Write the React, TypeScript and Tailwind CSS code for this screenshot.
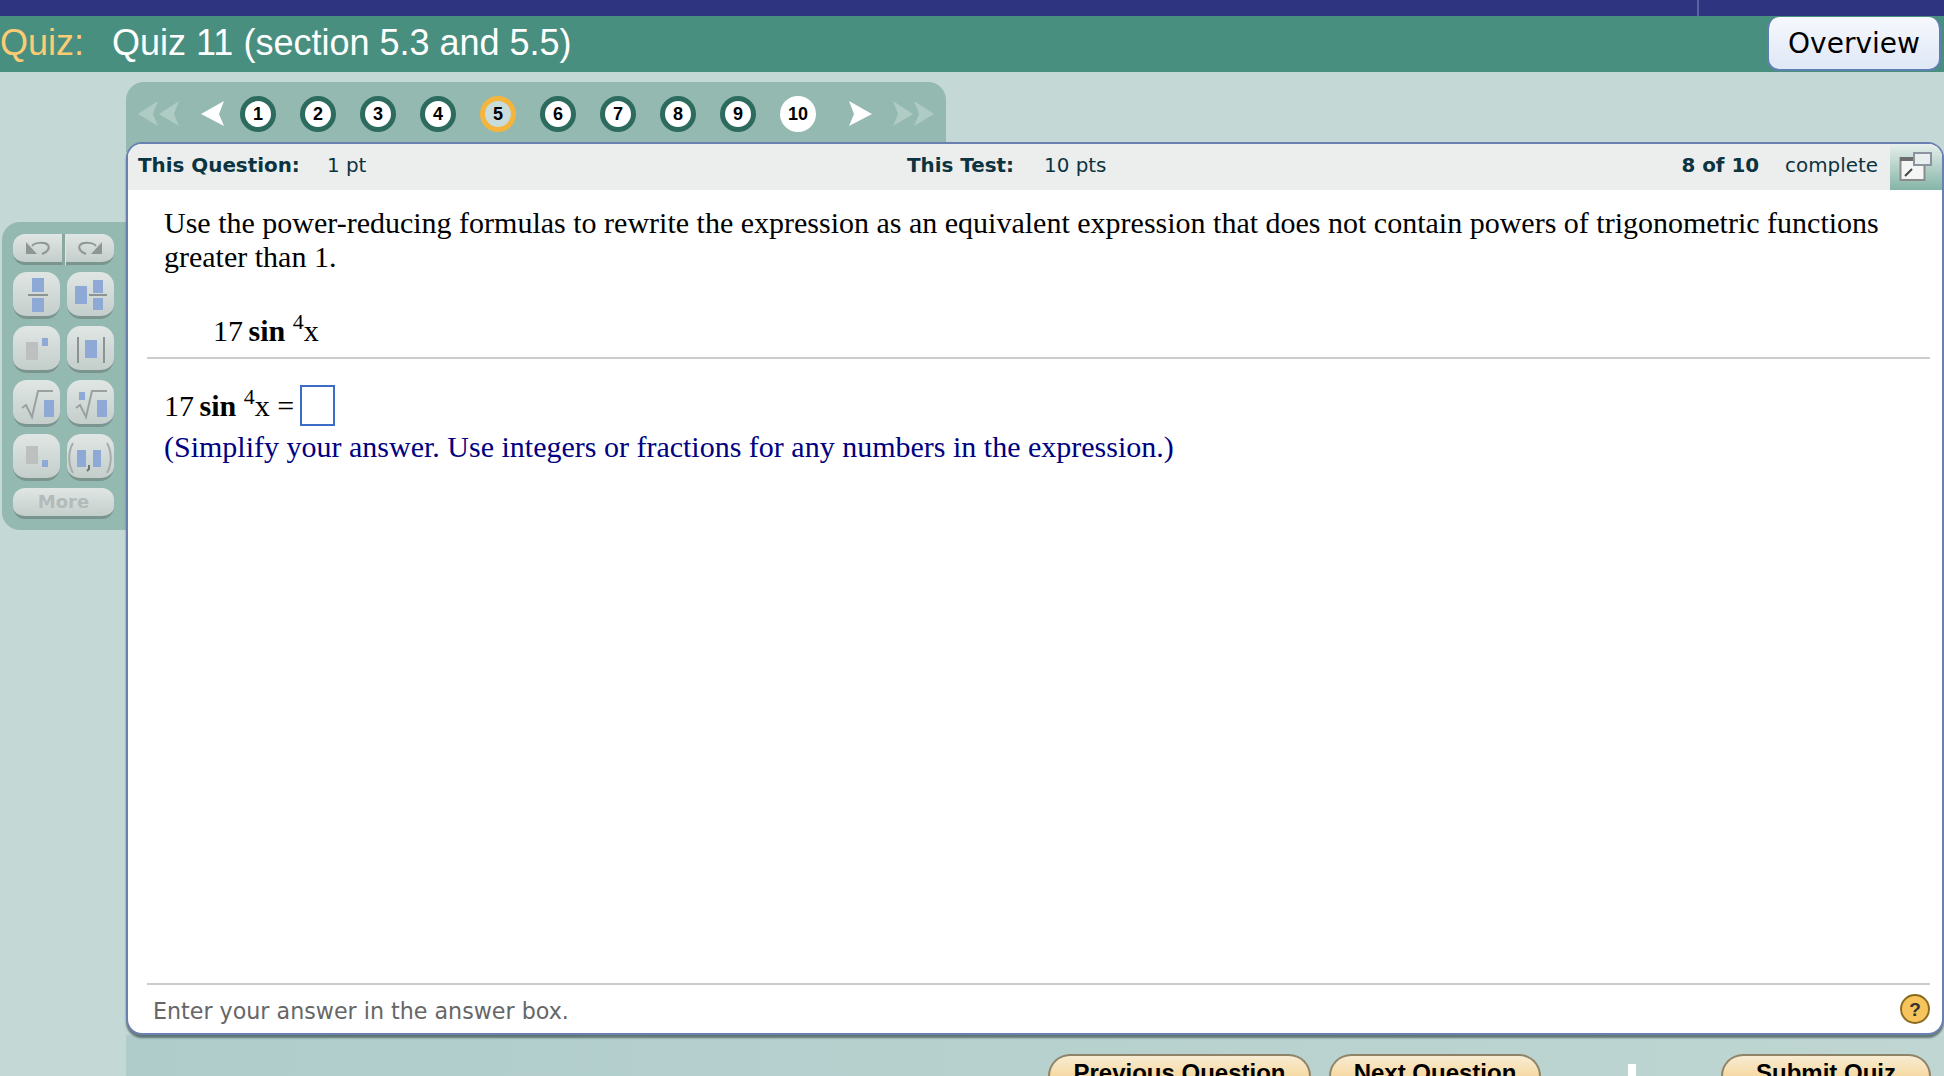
const serif = "font-['Liberation_Serif',serif]";

const questionNums = [1, 2, 3, 4, 5, 6, 7, 8, 9, 10];

function PaletteBtn({ children }: { children: React.ReactNode }) {
  return (
    <button className="w-[47px] h-[47px] rounded-[14px] bg-gradient-to-b from-[#e0e6e4] to-[#c4cecb] border-b-[3px] border-[#7a958e] overflow-hidden">
      <svg width="47" height="47" viewBox="0 0 47 47" className="block">{children}</svg>
    </button>
  );
}

const BLUE = "#8fa9d6";
const GRAY = "#bcc0c0";
const LINE = "#8a9493";

function Palette() {
  return (
    <div className="w-[124px] ml-[2px] h-[308px] bg-[#93b9b1] rounded-l-[18px] pt-[12px] pl-[11px] flex flex-col">
      <div className="flex h-[31px] w-[101px]">
        <div className="w-[49px] rounded-l-[12px] bg-gradient-to-b from-[#e0e6e4] to-[#c4cecb] border-b-[3px] border-[#7a958e] flex items-center justify-center">
          <svg width="26" height="16" viewBox="0 0 26 16">
            <path d="M7 6 C10 2 20 2 23 5 C25 8 23 12 17 14" fill="none" stroke="#8f9796" strokeWidth="2" />
            <path d="M1 2 L1 14 L12 14 Z" fill="#8f9796" />
          </svg>
        </div>
        <div className="w-[4px] bg-[#8aa8a2] border-r border-[#dfe7e4]" />
        <div className="w-[48px] rounded-r-[12px] bg-gradient-to-b from-[#e0e6e4] to-[#c4cecb] border-b-[3px] border-[#7a958e] flex items-center justify-center">
          <svg width="26" height="16" viewBox="0 0 26 16">
            <path d="M19 6 C16 2 6 2 3 5 C1 8 3 12 9 14" fill="none" stroke="#8f9796" strokeWidth="2" />
            <path d="M25 2 L25 14 L14 14 Z" fill="#8f9796" />
          </svg>
        </div>
      </div>
      <div className="grid grid-cols-[47px_47px] gap-x-[7px] gap-y-[7px] mt-[7px]">
        <PaletteBtn>
          <rect x="19" y="6" width="12" height="14" fill={BLUE} />
          <rect x="15" y="22" width="20" height="2" fill={LINE} />
          <rect x="19" y="26" width="12" height="14" fill={BLUE} />
        </PaletteBtn>
        <PaletteBtn>
          <rect x="8" y="14" width="12" height="18" fill={BLUE} />
          <rect x="26" y="8" width="10" height="13" fill={BLUE} />
          <rect x="22" y="22" width="18" height="2" fill={LINE} />
          <rect x="26" y="26" width="10" height="12" fill={BLUE} />
        </PaletteBtn>
        <PaletteBtn>
          <rect x="13" y="16" width="12" height="18" fill={GRAY} />
          <rect x="29" y="12" width="6" height="8" fill={BLUE} />
        </PaletteBtn>
        <PaletteBtn>
          <rect x="10" y="11" width="2" height="26" fill={LINE} />
          <rect x="18" y="14" width="12" height="18" fill={BLUE} />
          <rect x="36" y="11" width="2" height="26" fill={LINE} />
        </PaletteBtn>
        <PaletteBtn>
          <path d="M9 28 L13 25 L19 37 L25 11 L40 11" fill="none" stroke="#9aa2a1" strokeWidth="2" />
          <rect x="31" y="20" width="10" height="17" fill={BLUE} />
        </PaletteBtn>
        <PaletteBtn>
          <rect x="12" y="12" width="6" height="8" fill={BLUE} />
          <path d="M9 28 L13 25 L19 37 L25 11 L40 11" fill="none" stroke="#9aa2a1" strokeWidth="2" />
          <rect x="30" y="20" width="10" height="17" fill={BLUE} />
        </PaletteBtn>
        <PaletteBtn>
          <rect x="13" y="12" width="12" height="18" fill={GRAY} />
          <rect x="29" y="26" width="6" height="7" fill={BLUE} />
        </PaletteBtn>
        <PaletteBtn>
          <path d="M6 9 C1 18 1 30 6 39" fill="none" stroke="#a5acab" strokeWidth="2" />
          <rect x="10" y="16" width="9" height="17" fill={BLUE} />
          <path d="M22 31 L22 35 L20 37" fill="none" stroke="#6b7574" strokeWidth="2" />
          <rect x="26" y="16" width="8" height="17" fill={BLUE} />
          <path d="M40 9 C45 18 45 30 40 39" fill="none" stroke="#a5acab" strokeWidth="2" />
        </PaletteBtn>
      </div>
      <button className="w-[101px] h-[31px] mt-[7px] rounded-[12px] bg-gradient-to-b from-[#e0e6e4] to-[#c4cecb] border-b-[3px] border-[#7a958e] text-[#b3bbba] font-bold text-[18px] leading-none font-['DejaVu_Sans',sans-serif]">
        More
      </button>
    </div>
  );
}

function QuestionNav() {
  return (
    <div className="w-[820px] h-[70px] bg-[#93b9b1] rounded-t-[18px] pl-[12px] pt-[14px] flex items-start shrink-0">
      <svg width="42" height="36" viewBox="0 0 42 36" className="shrink-0">
        <path d="M0 18 L20 5 L15 18 L20 30 Z M21 18 L41 5 L36 18 L41 30 Z" fill="#aecbc4" />
      </svg>
      <svg width="24" height="36" viewBox="0 0 24 36" className="ml-[21px] shrink-0">
        <path d="M0 18 L23 5 L18 18 L23 30 Z" fill="#ffffff" />
      </svg>
      <div className="flex gap-[24px] ml-[15px]">
        {questionNums.map((n) => (
          <div
            key={n}
            className={
              n === 5
                ? "w-[36px] h-[36px] rounded-full border-[5px] border-[#f5b53c] bg-[#c8dcdc] flex items-center justify-center font-bold text-[18px] text-black font-['Liberation_Sans',sans-serif]"
                : n === 10
                ? "w-[36px] h-[36px] rounded-full bg-white flex items-center justify-center font-bold text-[18px] text-black font-['Liberation_Sans',sans-serif]"
                : "w-[36px] h-[36px] rounded-full border-[5px] border-[#2d6b5e] bg-white flex items-center justify-center font-bold text-[18px] text-black font-['Liberation_Sans',sans-serif]"
            }
          >
            {n}
          </div>
        ))}
      </div>
      <svg width="24" height="36" viewBox="0 0 24 36" className="ml-[32px] shrink-0">
        <path d="M24 18 L1 5 L6 18 L1 30 Z" fill="#ffffff" />
      </svg>
      <svg width="42" height="36" viewBox="0 0 42 36" className="ml-[20px] shrink-0">
        <path d="M21 18 L1 5 L6 18 L1 30 Z M42 18 L22 5 L27 18 L22 30 Z" fill="#aecbc4" />
      </svg>
    </div>
  );
}

function InfoBar() {
  return (
    <div className="h-[46px] bg-[#eceeed] flex items-center text-[19.9px] leading-[24px] text-[#0c3440] font-['DejaVu_Sans',sans-serif] shrink-0">
      <div className="w-[779px] flex pl-[10px] pb-[2px]">
        <b className="w-[189px]">This Question:</b>
        <span>1 pt</span>
      </div>
      <div className="flex pb-[2px]">
        <b className="w-[137px]">This Test:</b>
        <span>10 pts</span>
      </div>
      <div className="ml-auto flex items-center h-full">
        <b className="mr-[26px] pb-[2px]">8 of 10</b>
        <span className="mr-[12px] pb-[2px]">complete</span>
        <div className="w-[52px] h-full bg-gradient-to-b from-[#e6efec] to-[#84b5a6] flex items-center justify-center">
          <svg width="34" height="30" viewBox="0 0 34 30">
            <rect x="1.5" y="6" width="24" height="22" fill="#f4f6f5" stroke="#8a8a8a" strokeWidth="2" />
            <rect x="1" y="5" width="25" height="4" fill="#6d6d6d" />
            <rect x="15" y="1" width="17" height="12" fill="#e8eeee" stroke="#8b93a0" strokeWidth="2" />
            <path d="M6 24 L13 17" fill="none" stroke="#444" strokeWidth="2" />
          </svg>
        </div>
      </div>
    </div>
  );
}

function SinExpr() {
  return (
    <>
      17 <b className="-ml-[2px]">sin</b> <sup className="text-[22px] -top-[12px] align-baseline">4</sup>x
    </>
  );
}

function Card() {
  return (
    <div className="relative -mt-[10px] h-[893px] shrink-0 bg-white border-2 border-[#6a80b0] rounded-[16px] overflow-hidden flex flex-col shadow-[0_3px_2px_rgba(60,80,80,0.7)]">
      <InfoBar />
      <div className={`${serif} text-[30px] leading-[34px] text-black pl-[36px] pr-[40px] pt-[16px]`}>
        Use the power-reducing formulas to rewrite the expression as an equivalent expression that does not contain powers of trigonometric functions greater than 1.
      </div>
      <div className={`${serif} text-[30px] leading-[34px] text-black pl-[85px] pt-[40px]`}>
        <SinExpr />
      </div>
      <div className="h-[2px] bg-[#cccccc] ml-[19px] mr-[12px] mt-[9px] shrink-0" />
      <div className={`${serif} text-[30px] leading-[34px] text-black pl-[36px] mt-[26px] flex items-center h-[41px]`}>
        <span className="whitespace-pre"><SinExpr /> =</span>
        <span className="w-[35px] h-[41px] border-2 border-[#3a6cc8] ml-[6px] inline-block" />
      </div>
      <div className={`${serif} text-[30px] leading-[34px] text-[#000080] pl-[36px] pt-[4px]`}>
        (Simplify your answer. Use integers or fractions for any numbers in the expression.)
      </div>
      <div className="flex-1" />
      <div className="h-[2px] bg-[#cccccc] ml-[19px] mr-[12px] shrink-0" />
      <div className="h-[48px] flex items-center justify-between pl-[25px] pr-[12px] text-[22.2px] text-[#666666] font-['DejaVu_Sans',sans-serif] shrink-0">
        <span className="pt-[5px]">Enter your answer in the answer box.</span>
        <span className="w-[30px] h-[30px] rounded-full bg-[#f6c35c] border-2 border-[#8a6a1c] flex items-center justify-center text-[#333] font-bold text-[19px] leading-none font-['Liberation_Sans',sans-serif]">
          ?
        </span>
      </div>
    </div>
  );
}

function FooterBtn({ label, className }: { label: string; className: string }) {
  return (
    <button className={`${className} h-[44px] shrink-0 rounded-t-[22px] border-2 border-b-0 border-[#8f8468] bg-gradient-to-b from-[#f8ecd2] to-[#f3c56c] text-black font-bold text-[24px] leading-none pb-[8px] font-['Liberation_Sans',sans-serif]`}>
      {label}
    </button>
  );
}

export default function App() {
  return (
    <div className="w-[1944px] h-[1076px] overflow-hidden bg-[#c4d8d6] flex flex-col">
      <div className="h-[16px] bg-[#2e3480] flex shrink-0">
        <div className="w-[1697px]" />
        <div className="w-[2px] bg-[#5a60a0]" />
      </div>
      <div className="h-[56px] bg-[#488f80] flex items-center shrink-0 text-[36px] font-['Liberation_Sans',sans-serif]">
        <span className="text-[#fccb74] w-[112px] -mt-[3px]">Quiz:</span>
        <span className="text-white -mt-[3px]">Quiz 11 (section 5.3 and 5.5)</span>
        <button className="ml-auto mr-[3px] w-[174px] h-[54px] rounded-[12px] border-2 border-t-0 border-[#5f7fb0] bg-gradient-to-b from-[#f6f8fd] to-[#dfe8f6] text-black text-[28px] pt-[2px] font-['DejaVu_Sans',sans-serif]">
          Overview
        </button>
      </div>
      <div className="flex flex-1 min-h-0">
        <div className="w-[126px] shrink-0 pt-[150px]">
          <Palette />
        </div>
        <div className="flex-1 flex flex-col pt-[10px] min-w-0">
          <QuestionNav />
          <Card />
          <div className="flex-1 bg-gradient-to-r from-[#afcccb] to-[#bfd6d2] pt-[19px] flex items-start">
            <FooterBtn label="Previous Question" className="w-[263px] ml-[922px]" />
            <FooterBtn label="Next Question" className="w-[212px] ml-[18px]" />
            <div className="w-[8px] h-[12px] bg-white mt-[10px] ml-[87px]" />
            <FooterBtn label="Submit Quiz" className="w-[210px] ml-[85px]" />
          </div>
        </div>
      </div>
    </div>
  );
}
